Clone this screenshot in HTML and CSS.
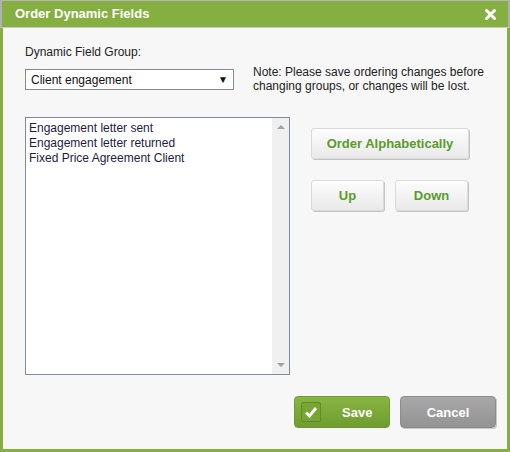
FILE: index.html
```html
<!DOCTYPE html>
<html>
<head>
<meta charset="utf-8">
<link rel="stylesheet" href="styles.css">
</head>
<body>
<div class="dialog">
  <div class="titlebar">
    <span class="title">Order Dynamic Fields</span>
    <svg class="close" width="11" height="11" viewBox="0 0 11 11"><path d="M1.5 1.5 L9.5 9.5 M9.5 1.5 L1.5 9.5" stroke="#fff" stroke-width="3" stroke-linecap="square"/></svg>
  </div>
  <div class="content">
    <div class="label">Dynamic Field Group:</div>
    <div class="top-row">
      <div class="select">
        <span>Client engagement</span>
        <span class="arrow">&#9660;</span>
      </div>
      <div class="note">Note: Please save ordering changes before<br>changing groups, or changes will be lost.</div>
    </div>
    <div class="main-row">
      <div class="listbox">
        <div class="items">
          <div>Engagement letter sent</div>
          <div>Engagement letter returned</div>
          <div>Fixed Price Agreement Client</div>
        </div>
        <div class="scrollbar">
          <span class="tri up"></span>
          <span class="tri down"></span>
        </div>
      </div>
      <div class="actions">
        <button class="btn wide">Order Alphabetically</button>
        <div class="pair">
          <button class="btn small">Up</button>
          <button class="btn small down-btn">Down</button>
        </div>
      </div>
    </div>
    <div class="footer">
      <button class="save">
        <span class="check"><svg width="14" height="12" viewBox="0 0 14 12"><path d="M2 6.5 L5.5 10 L12 2" fill="none" stroke="#fff" stroke-width="2.8"/></svg></span>
        <span class="save-text">Save</span>
      </button>
      <button class="cancel">Cancel</button>
    </div>
  </div>
</div>
</body>
</html>
```
FILE: styles.css
```css
html, body {
  margin: 0;
  padding: 0;
  background: #f7f7f7;
}
body {
  font-family: "Liberation Sans", Arial, sans-serif;
  font-size: 12px;
  color: #222;
}
.dialog {
  width: 510px;
  height: 452px;
  box-sizing: border-box;
  display: flex;
  flex-direction: column;
}
.titlebar {
  height: 28px;
  box-sizing: border-box;
  background: #85af40;
  border-top: 1px solid #b4b4b4;
  border-left: 2px solid #b0b0b0;
  border-right: 2px solid #b0b0b0;
  border-bottom: 1px solid #c8c8c8;
  display: flex;
  align-items: center;
  justify-content: space-between;
  padding: 0 12px 0 13px;
}
.title {
  color: #fff;
  font-weight: bold;
  font-size: 13px;
  position: relative;
  top: -1px;
}
.close {
  display: block;
}
.content {
  flex: 1;
  background: #f7f7f7;
  border: 3px solid #86ae40;
  border-top: none;
  padding: 17px 11px 0 22px;
  display: flex;
  flex-direction: column;
}
.label {
  line-height: 14px;
  color: #222;
}
.top-row {
  display: flex;
  margin-top: 6px;
  align-items: flex-start;
}
.select {
  width: 209px;
  height: 21px;
  box-sizing: border-box;
  margin-top: 4px;
  border: 1px solid #8a8a8a;
  background: #fff;
  display: flex;
  align-items: center;
  justify-content: space-between;
  padding: 0 5px 0 5px;
  color: #111;
}
.arrow {
  font-size: 10px;
  color: #111;
}
.note {
  margin-left: 19px;
  line-height: 14px;
  color: #222;
}
.main-row {
  display: flex;
  margin-top: 24px;
}
.listbox {
  width: 265px;
  height: 258px;
  box-sizing: border-box;
  border: 1px solid #7f8a9c;
  background: #fff;
  display: flex;
}
.items {
  flex: 1;
  padding: 3px 3px;
  line-height: 15px;
  color: #1c1c44;
}
.scrollbar {
  width: 17px;
  background: #f0f0f0;
  display: flex;
  flex-direction: column;
  justify-content: space-between;
  align-items: center;
  padding: 7px 0 7px;
}
.tri {
  width: 0;
  height: 0;
  border-left: 4px solid transparent;
  border-right: 4px solid transparent;
}
.tri.up {
  border-bottom: 4px solid #a3a3a3;
}
.tri.down {
  border-top: 4px solid #a3a3a3;
}
.actions {
  margin-left: 21px;
  padding-top: 11px;
  display: flex;
  flex-direction: column;
}
.btn {
  font-family: "Liberation Sans", Arial, sans-serif;
  font-weight: bold;
  font-size: 13px;
  color: #5a9a2c;
  background: linear-gradient(#fdfdfd, #e9e9e9);
  border: 1px solid #dadada;
  border-radius: 3px;
  box-shadow: 1px 1px 0 #c4c4c4;
  height: 31px;
  padding: 0;
  cursor: pointer;
}
.btn.wide {
  width: 158px;
}
.pair {
  display: flex;
  margin-top: 21px;
  gap: 11px;
}
.btn.small {
  width: 73px;
}
.btn.down-btn {
  width: 73px;
}
.footer {
  margin-top: 21px;
  display: flex;
  justify-content: flex-end;
  gap: 10px;
}
.save, .cancel {
  font-family: "Liberation Sans", Arial, sans-serif;
  font-weight: bold;
  font-size: 13px;
  color: #fff;
  width: 96px;
  height: 32px;
  border-radius: 4px;
  padding: 0;
  box-sizing: border-box;
}
.save {
  background: linear-gradient(#88b644, #6f9c2f);
  border: 1px solid #6c9a30;
  display: flex;
  align-items: center;
  padding-left: 6px;
}
.check {
  width: 20px;
  height: 20px;
  box-sizing: border-box;
  border: 1px solid #5f8c28;
  border-radius: 2px;
  background: #79a537;
  display: flex;
  align-items: center;
  justify-content: center;
}
.save-text {
  margin-left: 21px;
}
.cancel {
  background: linear-gradient(#a8a8a8, #939393);
  border: 1px solid #8c8c8c;
  box-shadow: 1px 1px 0 #c8c8c8;
}
```
